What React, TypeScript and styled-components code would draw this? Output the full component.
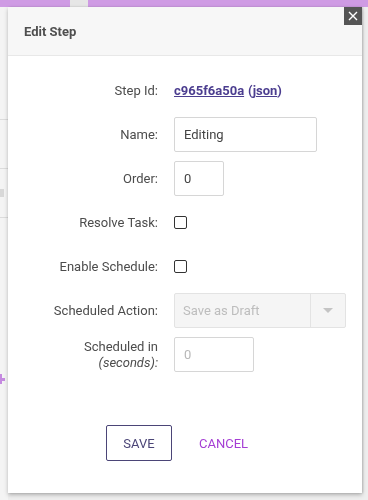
import React from 'react'
import styled, { createGlobalStyle } from 'styled-components'

const GlobalStyle = createGlobalStyle`
  html, body {
    margin: 0;
    padding: 0;
    width: 368px;
    height: 500px;
    overflow: hidden;
    background: #ececec;
    font-family: Roboto, "Noto Sans", Arial, sans-serif;
  }
`

const Page = styled.div`
  width: 368px;
  height: 500px;
  display: flex;
  flex-direction: column;
  background: #eeeeee;
`

const TopBar = styled.div`
  display: flex;
  height: 7px;
  gap: 18px;
  background: #e6e6e6;
`

const BarSegment = styled.div<{ $w: string }>`
  flex: ${(p) => p.$w};
  background: #cf9be4;
`

const Backdrop = styled.div`
  flex: 1;
  display: flex;
`

const SideList = styled.div`
  width: 8px;
  padding-top: 112px;
  display: flex;
  flex-direction: column;
  background: #f4f4f4;
`

const SideRow = styled.div<{ $tab?: boolean }>`
  height: 48px;
  border-top: 1px solid #dcdcdc;
  display: flex;
  align-items: center;
  &::before {
    content: '';
    width: 4px;
    height: 8px;
    background: ${(p) => (p.$tab ? '#d8d8d8' : 'transparent')};
  }
`

const PlusIcon = styled.div`
  margin-top: 108px;
  margin-left: -5px;
  width: 10px;
  height: 10px;
  background:
    linear-gradient(#c58ae0, #c58ae0) center / 10px 3px no-repeat,
    linear-gradient(#c58ae0, #c58ae0) center / 3px 10px no-repeat;
`

const Overlay = styled.div`
  position: fixed;
  left: 8px;
  top: 7px;
  width: 354px;
  height: 486px;
  background: #ffffff;
  box-shadow: 0 2px 4px rgba(0, 0, 0, 0.25), 1px 0 2px rgba(0, 0, 0, 0.15);
  display: flex;
  flex-direction: column;
`

const Header = styled.div`
  height: 49px;
  box-sizing: border-box;
  padding: 0 16px;
  display: flex;
  align-items: center;
  background: #f7f7f7;
  border-bottom: 1px solid #e8e8e8;
  font-size: 13px;
  font-weight: 700;
  color: #4f4f4f;
`

const CloseButton = styled.button`
  position: absolute;
  top: 0;
  right: 0;
  width: 18px;
  height: 18px;
  padding: 0;
  border: none;
  background: #555555;
  display: flex;
  align-items: center;
  justify-content: center;
`

const Form = styled.div`
  display: grid;
  grid-template-columns: 150px 1fr;
  column-gap: 16px;
  row-gap: 9px;
  grid-auto-rows: 35px;
  padding: 17px 16px 0 0;
`

const Label = styled.div`
  display: flex;
  flex-direction: column;
  justify-content: center;
  align-items: flex-end;
  text-align: right;
  font-size: 13px;
  line-height: 16px;
  color: #4c4c4c;
`

const Italic = styled.span`
  font-style: italic;
`

const Field = styled.div`
  display: flex;
  align-items: center;
`

const IdLink = styled.a`
  font-size: 13px;
  font-weight: 700;
  color: #4b3d8f;
  text-decoration: underline;
`

const Paren = styled.span`
  font-size: 13px;
  font-weight: 700;
  color: #4b3d8f;
  margin-left: 4px;
`

const TextInput = styled.input<{ $w: number }>`
  width: ${(p) => p.$w}px;
  height: 35px;
  box-sizing: border-box;
  border: 1px solid #d6d6d6;
  border-radius: 2px;
  padding: 0 9px;
  font-family: inherit;
  font-size: 13px;
  color: #444444;
  background: #ffffff;
  &::placeholder {
    color: #b8b8b8;
  }
`

const CheckBox = styled.span`
  width: 13px;
  height: 13px;
  box-sizing: border-box;
  border: 1.5px solid #333333;
  border-radius: 2px;
`

const Select = styled.div`
  width: 172px;
  height: 35px;
  box-sizing: border-box;
  display: flex;
  border: 1px solid #e3e3e3;
  border-radius: 2px;
  background: #f5f5f5;
`

const SelectValue = styled.div`
  flex: 1;
  display: flex;
  align-items: center;
  padding-left: 8px;
  font-size: 13px;
  color: #bdbdbd;
`

const SelectCaret = styled.div`
  width: 34px;
  border-left: 1px solid #e3e3e3;
  display: flex;
  align-items: center;
  justify-content: center;
`

const Caret = styled.span`
  width: 0;
  height: 0;
  border-left: 5px solid transparent;
  border-right: 5px solid transparent;
  border-top: 5px solid #c4c4c4;
`

const Actions = styled.div`
  display: flex;
  align-items: center;
  gap: 27px;
  padding: 53px 0 0 98px;
`

const SaveButton = styled.button`
  width: 66px;
  height: 36px;
  border: 1px solid #4b4577;
  border-radius: 2px;
  background: #ffffff;
  font-family: inherit;
  font-size: 13px;
  color: #4b4577;
`

const CancelButton = styled.button`
  border: none;
  background: none;
  padding: 0;
  font-family: inherit;
  font-size: 13px;
  color: #a53ed4;
`

export default function App() {
  return (
    <Page>
      <GlobalStyle />
      <TopBar>
        <BarSegment $w="0 0 70px" />
        <BarSegment $w="1" />
      </TopBar>
      <Backdrop>
        <SideList>
          <SideRow />
          <SideRow $tab />
          <SideRow />
          <PlusIcon />
        </SideList>
      </Backdrop>
      <Overlay>
        <Header>Edit Step</Header>
        <CloseButton aria-label="close">
          <svg width="12" height="12" viewBox="0 0 12 12">
            <path d="M2 2 L10 10 M10 2 L2 10" stroke="#ffffff" strokeWidth="1.4" />
          </svg>
        </CloseButton>
        <Form>
          <Label>Step Id:</Label>
          <Field>
            <IdLink href="#">c965f6a50a</IdLink>
            <Paren>
              (<IdLink href="#">json</IdLink>)
            </Paren>
          </Field>
          <Label>Name:</Label>
          <Field>
            <TextInput $w={143} defaultValue="Editing" />
          </Field>
          <Label>Order:</Label>
          <Field>
            <TextInput $w={50} defaultValue="0" />
          </Field>
          <Label>Resolve Task:</Label>
          <Field>
            <CheckBox />
          </Field>
          <Label>Enable Schedule:</Label>
          <Field>
            <CheckBox />
          </Field>
          <Label>Scheduled Action:</Label>
          <Field>
            <Select>
              <SelectValue>Save as Draft</SelectValue>
              <SelectCaret>
                <Caret />
              </SelectCaret>
            </Select>
          </Field>
          <Label>
            <span>Scheduled in</span>
            <Italic>(seconds):</Italic>
          </Label>
          <Field>
            <TextInput $w={80} placeholder="0" />
          </Field>
        </Form>
        <Actions>
          <SaveButton>SAVE</SaveButton>
          <CancelButton>CANCEL</CancelButton>
        </Actions>
      </Overlay>
    </Page>
  )
}
